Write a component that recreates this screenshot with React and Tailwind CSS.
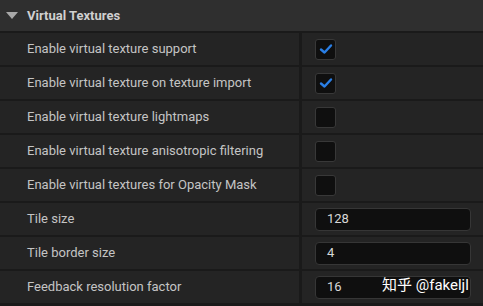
import React from "react";

const rows = [
  { label: "Enable virtual texture support", type: "check", value: true },
  { label: "Enable virtual texture on texture import", type: "check", value: true },
  { label: "Enable virtual texture lightmaps", type: "check", value: false },
  { label: "Enable virtual texture anisotropic filtering", type: "check", value: false },
  { label: "Enable virtual textures for Opacity Mask", type: "check", value: false },
  { label: "Tile size", type: "num", value: "128" },
  { label: "Tile border size", type: "num", value: "4" },
  { label: "Feedback resolution factor", type: "num", value: "16" },
];

const Check = ({ checked }) => (
  <div className="w-[21px] h-[21px] rounded-[3px] bg-[#0f0f0f] border border-[#383838] flex items-center justify-center">
    {checked && (
      <svg width="14" height="12" viewBox="0 0 14 12">
        <path d="M2 6.5 L5.5 9.5 L12 2.5" fill="none" stroke="#2a7fe6" strokeWidth="2.4" strokeLinecap="round" strokeLinejoin="round" />
      </svg>
    )}
  </div>
);

export default function App() {
  return (
    <div className="relative w-[483px] h-[306px] bg-[#1a1a1a] overflow-hidden text-[13px] text-[#c4c4c4]" style={{ fontFamily: "Roboto, 'Noto Sans CJK SC', sans-serif" }}>
      <div className="h-[31px] bg-[#2f2f2f] flex items-center pl-[6px]">
        <svg width="12" height="8" viewBox="0 0 12 8" className="mr-[9px]">
          <path d="M0 0 L12 0 L6 7 Z" fill="#a8a8a8" />
        </svg>
        <span className="font-bold text-[#d0d0d0]">Virtual Textures</span>
      </div>
      {rows.map((r) => (
        <div key={r.label} className="flex h-[34px] border-t-2 border-[#1a1a1a]">
          <div className="w-[299px] bg-[#242424] flex items-center pl-[27px]">{r.label}</div>
          <div className="w-[3px] bg-[#1a1a1a]" />
          <div className="flex-1 bg-[#242424] flex items-center pl-[13px]">
            {r.type === "check" ? (
              <Check checked={r.value} />
            ) : (
              <div className="w-[156px] h-[23px] rounded-[4px] bg-[#0f0f0f] border border-[#363636] flex items-center pl-[11px] text-[#d8d8d8]">
                {r.value}
              </div>
            )}
          </div>
        </div>
      ))}
      <div className="absolute left-[382px] top-[274px] text-[15px] text-white">知乎 @fakeljl</div>
    </div>
  );
}
